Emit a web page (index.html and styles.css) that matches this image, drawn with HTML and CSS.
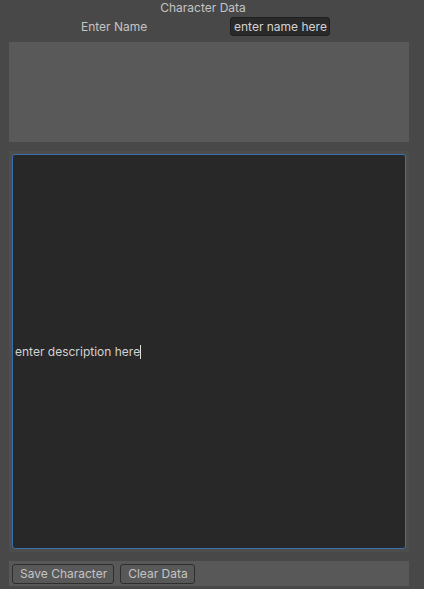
FILE: index.html
```html
<!DOCTYPE html>
<html>
<head>
<meta charset="utf-8">
<link rel="stylesheet" href="styles.css">
</head>
<body>
<div class="page">
  <div class="title">Character Data</div>
  <div class="name-row">
    <span class="label">Enter Name</span>
    <span class="name-input">enter name here</span>
  </div>
  <div class="preview"></div>
  <div class="desc-wrap">
    <div class="desc">
      <span class="desc-text">enter description here</span><span class="caret"></span>
    </div>
  </div>
  <div class="buttons">
    <button class="btn">Save Character</button>
    <button class="btn">Clear Data</button>
  </div>
</div>
</body>
</html>
```

FILE: styles.css
```css
html, body {
  margin: 0;
  padding: 0;
  background: #484848;
  height: 100%;
}
body {
  font-family: Inter, "Noto Sans", sans-serif;
  font-size: 12px;
  color: #c4c4c4;
}
.page {
  width: 418px;
  display: flex;
  flex-direction: column;
}
.title {
  text-align: center;
  height: 15px;
  line-height: 15px;
  padding-right: 12px;
}
.name-row {
  display: flex;
  align-items: center;
  height: 20px;
  margin-top: 1px;
  padding-left: 81px;
}
.label {
  width: 149px;
}
.name-input {
  background: #2a2a2a;
  border: 1px solid #1f1f1f;
  border-radius: 3px;
  color: #d2d2d2;
  height: 17px;
  line-height: 17px;
  padding: 0 2px 0 3px;
}
.preview {
  margin: 6px 0 0 9px;
  width: 400px;
  height: 100px;
  background: #595959;
}
.desc-wrap {
  margin: 9px 0 0 9px;
  width: 400px;
  height: 401px;
  background: #4d4d4d;
  padding: 3px;
  box-sizing: border-box;
}
.desc {
  width: 394px;
  height: 395px;
  box-sizing: border-box;
  background: #282828;
  border: 1px solid #3b6fae;
  border-radius: 3px;
  display: flex;
  align-items: center;
  padding-left: 2px;
  color: #d2d2d2;
}
.caret {
  display: inline-block;
  width: 1px;
  height: 14px;
  background: #e0e0e0;
}
.buttons {
  margin: 9px 0 0 9px;
  width: 400px;
  height: 25px;
  background: #585858;
  display: flex;
  align-items: center;
  gap: 6px;
  padding-left: 3px;
  box-sizing: border-box;
}
.btn {
  font-family: Inter, "Noto Sans", sans-serif;
  font-size: 12px;
  line-height: 17px;
  color: #c4c4c4;
  background: #585858;
  border: 1px solid #2e2e2e;
  border-radius: 3px;
  height: 20px;
  padding: 0 6px 1px 7px;
  margin: 0;
}
```
